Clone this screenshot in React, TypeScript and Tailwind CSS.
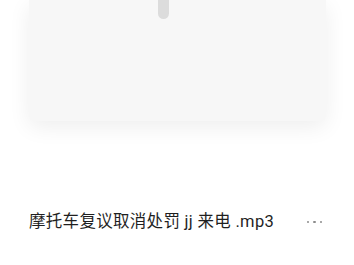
export default function App() {
  return (
    <div className="w-[354px] h-[265px] bg-white overflow-hidden" style={{ fontFamily: 'Roboto, "Noto Sans CJK SC", sans-serif' }}>
      {/* preview card */}
      <div className="mx-[29px] w-[297px] h-[121px] bg-[#f7f7f7] rounded-b-[6px] shadow-[0_6px_22px_rgba(0,0,0,0.07)]">
        <div className="ml-[129px] w-[11px] h-[19px] rounded-b-full bg-[#dcdcdc]" />
      </div>

      {/* file row */}
      <div className="mt-[89px] pl-[29px] pr-[32px] h-[24px] flex items-center justify-between">
        <p className="text-[16.5px] leading-[24px] tracking-[0.3px] text-[#1f1f1f]">摩托车复议取消处罚 jj 来电 .mp3</p>
        <div className="flex gap-[4px]">
          <span className="w-[2.5px] h-[2.5px] rounded-full bg-[#8c8c8c]" />
          <span className="w-[2.5px] h-[2.5px] rounded-full bg-[#8c8c8c]" />
          <span className="w-[2.5px] h-[2.5px] rounded-full bg-[#8c8c8c]" />
        </div>
      </div>
    </div>
  );
}
